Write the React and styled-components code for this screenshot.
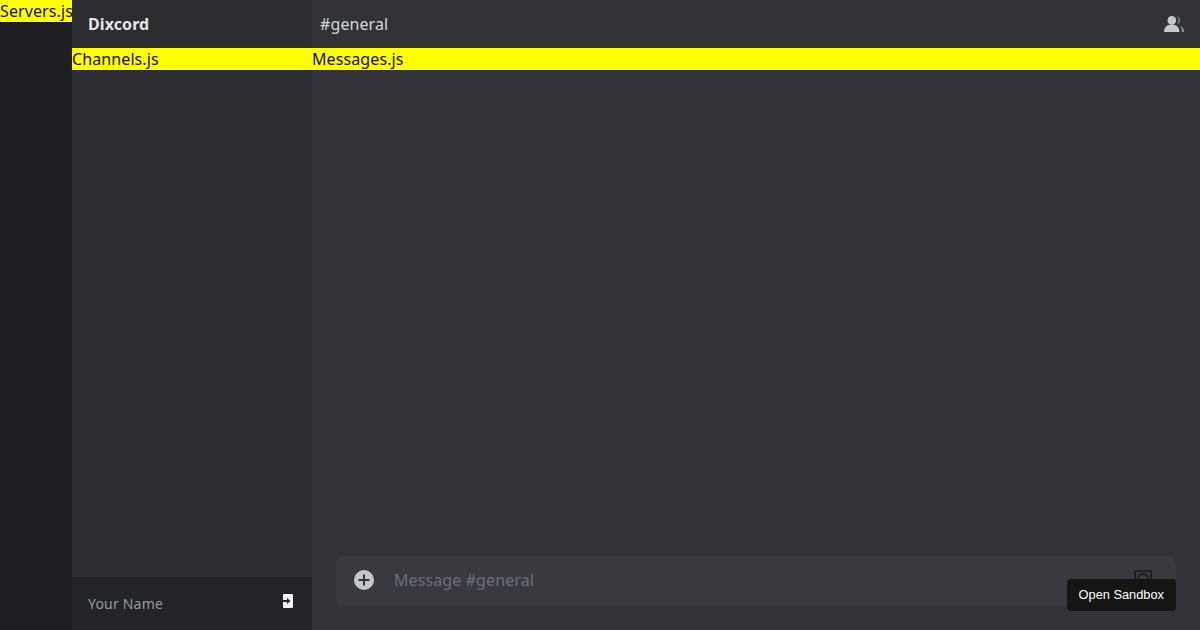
import styled, { createGlobalStyle } from "styled-components";

const GlobalStyle = createGlobalStyle`
  html, body, #root {
    height: 100%;
  }
  body {
    margin: 0;
    font-family: "Noto Sans", sans-serif;
    font-size: 16px;
    letter-spacing: 0.1px;
    overflow: hidden;
  }
`;

const App = () => {
  return (
    <Layout>
      <GlobalStyle />
      <ServerColumn>
        <FileLabel>Servers.js</FileLabel>
      </ServerColumn>

      <ChannelColumn>
        <Brand>Dixcord</Brand>
        <FileLabel>Channels.js</FileLabel>
        <UserBar>
          <span>Your Name</span>
          <LogoutIcon viewBox="0 0 10 14">
            <rect width="10" height="14" rx="1" fill="#f3f4f6" />
            <path d="M0 6h4V4l3.500 3L4 10V8H0z" fill="#232428" />
          </LogoutIcon>
        </UserBar>
      </ChannelColumn>

      <MainColumn>
        <Header>
          <span>#general</span>
          <UsersIcon viewBox="0 0 20 16">
            <circle cx="7.800" cy="4.400" r="4.300" fill="#c4c7cc" />
            <path d="M0 16c0-4.800 3-7.500 7.700-7.500s7.700 2.700 7.700 7.500z" fill="#c4c7cc" />
            <path d="M12.800 0c2 .8 3.200 2.300 3.200 4.300s-1.200 3.500-3 4.200c1-1.200 1.600-2.600 1.600-4.200S14 1.200 12.800 0z" fill="#9a9ca1" />
            <path d="M16 9.800c2.500 1 4 3.200 4 6.200h-2c0-2.600-.7-4.600-2-6.200z" fill="#9a9ca1" />
          </UsersIcon>
        </Header>
        <FileLabel>Messages.js</FileLabel>
        <Composer>
          <ComposerBox>
            <PlusIcon viewBox="0 0 20 20">
              <circle cx="10" cy="10" r="10" fill="#c4c7cc" />
              <path d="M9 4.500h2V9h4.500v2H11v4.500H9V11H4.500V9H9z" fill="#313338" />
            </PlusIcon>
            <Placeholder>Message #general</Placeholder>
            <ImageIcon viewBox="0 0 18 18">
              <rect x="1" y="1" width="16" height="16" fill="none" stroke="#1e1f22" strokeWidth="2" />
              <path d="M4 11V9a5 5 0 0 1 10 0v2" fill="none" stroke="#1e1f22" strokeWidth="2" />
            </ImageIcon>
          </ComposerBox>
        </Composer>
      </MainColumn>

      <SandboxButton>Open Sandbox</SandboxButton>
    </Layout>
  );
};

export default App;

const Layout = styled.div`
  display: flex;
  width: 100%;
  height: 630px;
  position: relative;
`;

const FileLabel = styled.div`
  height: 22px;
  line-height: 22px;
  background: #ffff00;
  color: #111111;
  white-space: nowrap;
`;

const ServerColumn = styled.aside`
  width: 72px;
  flex-shrink: 0;
  background: #1e1f22;
`;

const ChannelColumn = styled.aside`
  width: 240px;
  flex-shrink: 0;
  display: flex;
  flex-direction: column;
  background: #2b2d31;
`;

const Brand = styled.h1`
  margin: 0;
  height: 48px;
  padding: 0 16px;
  display: flex;
  align-items: center;
  font-size: 16px;
  font-weight: 700;
  color: #e3e5e8;
`;

const UserBar = styled.div`
  margin-top: auto;
  height: 53px;
  padding: 0 19px 0 16px;
  display: flex;
  align-items: center;
  justify-content: space-between;
  background: #232428;
  color: #949ba4;
  font-size: 14px;
  letter-spacing: 0.2px;
`;

const LogoutIcon = styled.svg`
  width: 10px;
  height: 14px;
  margin-top: -5px;
`;

const MainColumn = styled.main`
  flex: 1;
  min-width: 0;
  display: flex;
  flex-direction: column;
  background: #313338;
`;

const Header = styled.header`
  height: 48px;
  padding: 0 16px 0 8px;
  display: flex;
  align-items: center;
  justify-content: space-between;
  color: #d4d7dc;
`;

const UsersIcon = styled.svg`
  width: 20px;
  height: 16px;
`;

const Composer = styled.div`
  margin-top: auto;
  padding: 0 24px 24px;
`;

const ComposerBox = styled.div`
  height: 50px;
  padding: 0 24px 0 18px;
  display: flex;
  align-items: center;
  gap: 20px;
  border-radius: 8px;
  background: #383a40;
`;

const PlusIcon = styled.svg`
  width: 20px;
  height: 20px;
  margin-top: -2px;
  flex-shrink: 0;
`;

const Placeholder = styled.span`
  flex: 1;
  margin-top: -2px;
  color: #6d6f78;
`;

const ImageIcon = styled.svg`
  width: 18px;
  height: 18px;
  margin-top: -4px;
`;

const SandboxButton = styled.a`
  position: absolute;
  right: 24px;
  bottom: 19px;
  height: 32px;
  padding: 0 12px 2px;
  box-sizing: border-box;
  display: flex;
  align-items: center;
  border-radius: 4px;
  background: #151515;
  color: #ffffff;
  font-family: "Liberation Sans", Arial, sans-serif;
  font-size: 12.8px;
  letter-spacing: 0;
`;
